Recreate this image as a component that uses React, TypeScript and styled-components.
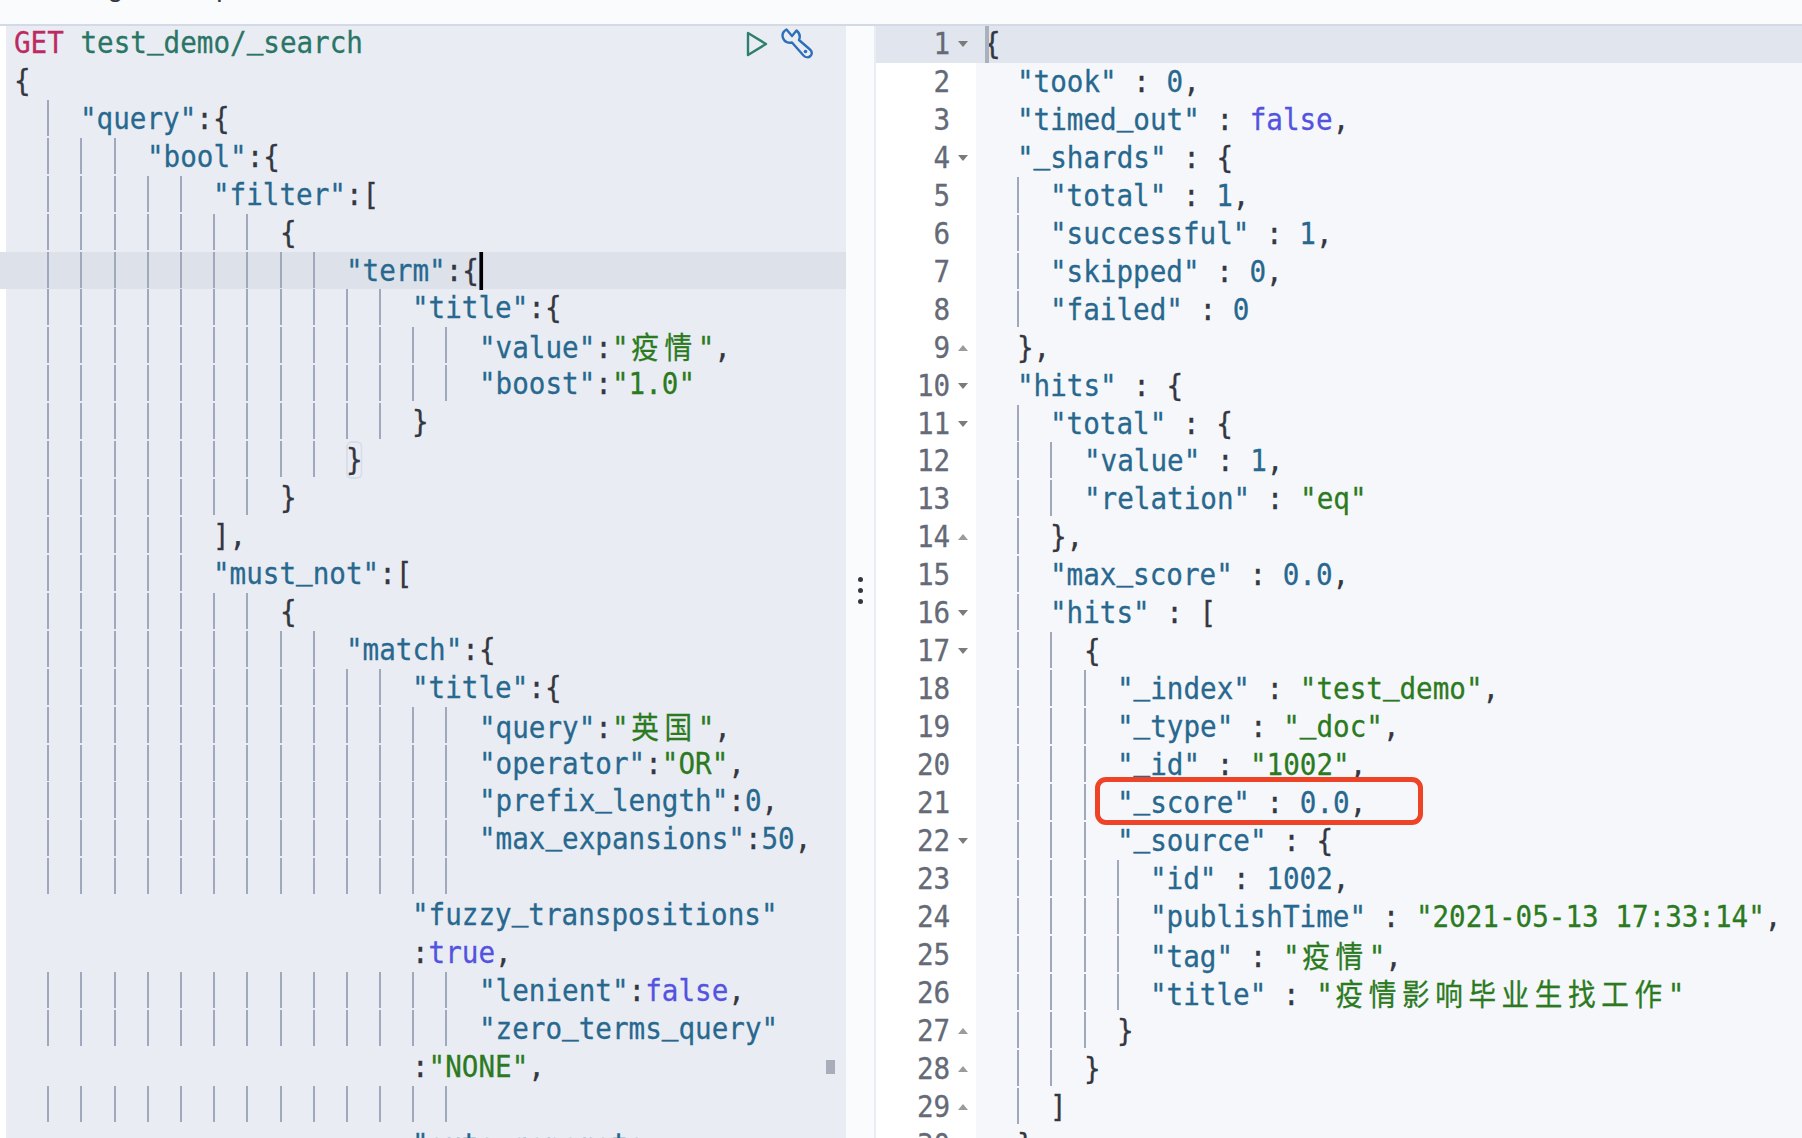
import React from "react";
import styled, { createGlobalStyle } from "styled-components";

type Kind = "key" | "str" | "num" | "bool" | "punct" | "method" | "url";
type Token = [Kind, string];
interface Line {
  guides: number;
  tokens: Token[];
  indent?: number;
  active?: boolean;
  fold?: "up" | "down";
  caret?: boolean;
  matched?: boolean;
  bar?: boolean;
  nudge?: boolean;
}

const ROW = 37.93;
const OUT_ROW = 37.96;
const CELL = 33.2;
const HAN = /[\u4e00-\u9fff]/;

const colors: Record<Kind, string> = {
  key: "#28688f",
  str: "#2c7a1f",
  num: "#28688f",
  bool: "#5353e0",
  punct: "#343741",
  method: "#bc2a63",
  url: "#2a7566",
};

const GlobalStyle = createGlobalStyle`
  html, body {
    margin: 0;
    padding: 0;
    background: #fafbfd;
    overflow: hidden;
  }
`;

const Page = styled.div`
  width: 1802px;
  height: 1138px;
  display: flex;
  flex-direction: column;
  overflow: hidden;
  font-family: "DejaVu Sans Mono", "Noto Sans CJK SC", monospace;
`;

const TopBar = styled.div`
  flex: 0 0 26px;
  box-sizing: border-box;
  position: relative;
  z-index: 2;
  display: flex;
  gap: 37px;
  padding-left: 36px;
  overflow: hidden;
  background: #fafbfd;
  border-bottom: 2px solid #d3dae6;
  font-family: "Liberation Sans", sans-serif;
  font-size: 28px;
  line-height: 32px;
  color: #343741;
`;

const TopLink = styled.span`
  margin-top: -29px;
  white-space: pre;
`;

const Panels = styled.div`
  flex: 1;
  display: flex;
  min-height: 0;
`;

const RequestPane = styled.div`
  flex: 0 0 846px;
  position: relative;
  overflow: hidden;
  background: linear-gradient(to right, #fff 6px, #e9edf3 6px);
`;

const Rows = styled.div<{ $top: number }>`
  display: flex;
  flex-direction: column;
  margin-top: ${(p) => p.$top}px;
`;

const Row = styled.div<{ $active?: boolean }>`
  flex: 0 0 ${ROW}px;
  height: ${ROW}px;
  display: flex;
  padding-left: 14px;
  background: ${(p) => (p.$active ? "#dde1ea" : "transparent")};
`;

const Cell = styled.span<{ $guide?: boolean }>`
  flex: 0 0 ${CELL}px;
  box-sizing: border-box;
  height: 36px;
  border-left: ${(p) => (p.$guide ? "2px solid #a0a8bb" : "none")};
`;

const Code = styled.span<{ $nudge?: boolean }>`
  display: inline-block;
  flex: none;
  font-size: 30px;
  line-height: 38px;
  white-space: pre;
  -webkit-text-stroke: 0.3px currentColor;
  transform: ${(p) => (p.$nudge ? "translateY(2px) " : "")}scaleX(0.92);
  transform-origin: left center;
`;

const Tok = styled.span<{ $kind: Kind }>`
  color: ${(p) => colors[p.$kind]};
`;

const Cjk = styled.span`
  letter-spacing: 6.1px;
  margin-left: 3px;
`;

// the reference's underscore sits right under the baseline and reads heavier
const Under = styled.span`
  display: inline-block;
  -webkit-text-stroke: 0.5px currentColor;
  transform: translateY(-5px);
`;

const Matched = styled.span`
  display: inline-block;
  color: #343741;
  border-radius: 6px;
  box-shadow: inset 0 0 0 2px #d8ddea;
`;

const BlackCaret = styled.span`
  display: inline-block;
  width: 4px;
  height: 38px;
  vertical-align: top;
  background: #000;
`;

const Actions = styled.div`
  position: absolute;
  top: 1px;
  right: 32px;
  display: flex;
  align-items: center;
  gap: 13px;
`;

const ScrollThumb = styled.div`
  position: absolute;
  top: 1034px;
  right: 11px;
  width: 9px;
  height: 14px;
  background: #a8adb9;
`;

const Resizer = styled.div`
  flex: 0 0 30px;
  box-sizing: border-box;
  display: flex;
  flex-direction: column;
  align-items: center;
  justify-content: center;
  gap: 6px;
  padding-top: 16px;
  background: #fafbfd;
  border-right: 2px solid #e9edf3;
`;

const Dot = styled.span`
  width: 5px;
  height: 5px;
  border-radius: 50%;
  background: #343741;
`;

const ResponsePane = styled.div`
  flex: 1;
  position: relative;
  overflow: hidden;
  background: #f5f7fa;
`;

const OutRow = styled.div<{ $active?: boolean }>`
  position: relative;
  flex: 0 0 ${OUT_ROW}px;
  height: ${OUT_ROW}px;
  display: flex;
  background: ${(p) => (p.$active ? "#e0e5ee" : "transparent")};
`;

const Gutter = styled.div<{ $active?: boolean }>`
  flex: 0 0 100px;
  display: flex;
  justify-content: flex-end;
  background: ${(p) => (p.$active ? "#e0e5ee" : "#fff")};
`;

const LineNo = styled.span`
  font-size: 30px;
  line-height: 38px;
  color: #646a77;
  -webkit-text-stroke: 0.3px currentColor;
  transform: scaleX(0.92);
  transform-origin: right center;
`;

const FoldSlot = styled.span`
  flex: 0 0 26px;
  display: flex;
  align-items: center;
  justify-content: center;
  box-sizing: border-box;
`;

const Fold = styled.span<{ $dir: "up" | "down" }>`
  width: 0;
  height: 0;
  border-left: 5px solid transparent;
  border-right: 5px solid transparent;
  ${(p) =>
    p.$dir === "down"
      ? "border-top: 6px solid #7b7b7b;"
      : "border-bottom: 6px solid #9b9b9b;"}
`;

const OutCode = styled.div`
  flex: 1;
  display: flex;
  padding-left: 8px;
`;

const GrayBar = styled.span`
  position: absolute;
  top: 0;
  bottom: 0;
  left: 109px;
  width: 4px;
  background: #aab0bd;
`;

const Callout = styled.div`
  position: absolute;
  left: 219px;
  top: 751px;
  width: 328px;
  height: 48px;
  box-sizing: border-box;
  border: 5px solid #ef4328;
  border-radius: 11px;
`;

const PlayIcon = () => (
  <svg width="22" height="26" viewBox="0 0 22 26" fill="none">
    <path d="M2 2 L20 13 L2 24 Z" stroke="#2f7f70" strokeWidth="2.4" strokeLinejoin="round" />
  </svg>
);

const WrenchIcon = () => (
  <svg width="33" height="33" viewBox="0 0 33 33" fill="none">
    <path
      d="M5.5 2.5 C2 4.5 .8 8 2.2 11.5 C3.6 15 7.5 16.5 11 15.5 L22.5 28.5 C24.5 30.5 27.5 30.8 29.5 29 C31.5 27 31 24 29 22.5 L18 13 C19.5 9.5 18.5 6 15.5 3.5 L11 9 Z"
      stroke="#2d6fb8"
      strokeWidth="2.4"
      strokeLinejoin="round"
    />
    <circle cx="24.5" cy="24.5" r="1.8" fill="#2d6fb8" />
  </svg>
);

const k = (t: string): Token => ["key", t];
const s = (t: string): Token => ["str", t];
const n = (t: string): Token => ["num", t];
const b = (t: string): Token => ["bool", t];
const p = (t: string): Token => ["punct", t];

const request: Line[] = [
  { guides: -1, tokens: [["method", "GET"], ["url", " test_demo/_search"]] },
  { guides: -1, tokens: [p("{")] },
  { guides: 1, tokens: [k('"query"'), p(":{")] },
  { guides: 3, tokens: [k('"bool"'), p(":{")] },
  { guides: 5, tokens: [k('"filter"'), p(":[")] },
  { guides: 7, tokens: [p("{")] },
  { guides: 9, tokens: [k('"term"'), p(":{")], active: true, caret: true },
  { guides: 11, tokens: [k('"title"'), p(":{")] },
  { guides: 13, tokens: [k('"value"'), p(":"), s('"疫情"'), p(",")] },
  { guides: 13, tokens: [k('"boost"'), p(":"), s('"1.0"')] },
  { guides: 11, tokens: [p("}")] },
  { guides: 9, tokens: [p("}")], matched: true },
  { guides: 7, tokens: [p("}")] },
  { guides: 5, tokens: [p("],")] },
  { guides: 5, tokens: [k('"must_not"'), p(":[")] },
  { guides: 7, tokens: [p("{")] },
  { guides: 9, tokens: [k('"match"'), p(":{")] },
  { guides: 11, tokens: [k('"title"'), p(":{")] },
  { guides: 13, tokens: [k('"query"'), p(":"), s('"英国"'), p(",")] },
  { guides: 13, tokens: [k('"operator"'), p(":"), s('"OR"'), p(",")] },
  { guides: 13, tokens: [k('"prefix_length"'), p(":"), n("0"), p(",")] },
  { guides: 13, tokens: [k('"max_expansions"'), p(":"), n("50"), p(",")] },
  { guides: 13, tokens: [] },
  { guides: 0, indent: 12, tokens: [k('"fuzzy_transpositions"')] },
  { guides: 0, indent: 12, tokens: [p(":"), b("true"), p(",")] },
  { guides: 13, tokens: [k('"lenient"'), p(":"), b("false"), p(",")] },
  { guides: 13, tokens: [k('"zero_terms_query"')] },
  { guides: 0, indent: 12, tokens: [p(":"), s('"NONE"'), p(",")] },
  { guides: 13, tokens: [] },
  { guides: 0, indent: 12, nudge: true, tokens: [k('"auto_generate')] },
];

const response: Line[] = [
  { guides: -1, tokens: [p("{")], active: true, fold: "down", bar: true },
  { guides: 0, tokens: [k('"took"'), p(" : "), n("0"), p(",")] },
  { guides: 0, tokens: [k('"timed_out"'), p(" : "), b("false"), p(",")] },
  { guides: 0, tokens: [k('"_shards"'), p(" : {")], fold: "down" },
  { guides: 1, tokens: [k('"total"'), p(" : "), n("1"), p(",")] },
  { guides: 1, tokens: [k('"successful"'), p(" : "), n("1"), p(",")] },
  { guides: 1, tokens: [k('"skipped"'), p(" : "), n("0"), p(",")] },
  { guides: 1, tokens: [k('"failed"'), p(" : "), n("0")] },
  { guides: 0, tokens: [p("},")], fold: "up" },
  { guides: 0, tokens: [k('"hits"'), p(" : {")], fold: "down" },
  { guides: 1, tokens: [k('"total"'), p(" : {")], fold: "down" },
  { guides: 2, tokens: [k('"value"'), p(" : "), n("1"), p(",")] },
  { guides: 2, tokens: [k('"relation"'), p(" : "), s('"eq"')] },
  { guides: 1, tokens: [p("},")], fold: "up" },
  { guides: 1, tokens: [k('"max_score"'), p(" : "), n("0.0"), p(",")] },
  { guides: 1, tokens: [k('"hits"'), p(" : [")], fold: "down" },
  { guides: 2, tokens: [p("{")], fold: "down" },
  { guides: 3, tokens: [k('"_index"'), p(" : "), s('"test_demo"'), p(",")] },
  { guides: 3, tokens: [k('"_type"'), p(" : "), s('"_doc"'), p(",")] },
  { guides: 3, tokens: [k('"_id"'), p(" : "), s('"1002"'), p(",")] },
  { guides: 3, tokens: [k('"_score"'), p(" : "), n("0.0"), p(",")] },
  { guides: 3, tokens: [k('"_source"'), p(" : {")], fold: "down" },
  { guides: 4, tokens: [k('"id"'), p(" : "), n("1002"), p(",")] },
  { guides: 4, tokens: [k('"publishTime"'), p(" : "), s('"2021-05-13 17:33:14"'), p(",")] },
  { guides: 4, tokens: [k('"tag"'), p(" : "), s('"疫情"'), p(",")] },
  { guides: 4, tokens: [k('"title"'), p(" : "), s('"疫情影响毕业生找工作"')] },
  { guides: 3, tokens: [p("}")], fold: "up" },
  { guides: 2, tokens: [p("}")], fold: "up" },
  { guides: 1, tokens: [p("]")], fold: "up" },
  { guides: 0, tokens: [p("},")] },
];

// CJK runs take two monospace cells in the editor, so they are spaced apart
function renderText(text: string) {
  return text.split(/([\u4e00-\u9fff]+|_)/).map((part, i) => {
    if (part === "_") return <Under key={i}>_</Under>;
    return HAN.test(part) ? <Cjk key={i}>{part}</Cjk> : part;
  });
}

function Indent({ line }: { line: Line }) {
  const cells: React.ReactNode[] = [];
  if (line.indent) {
    for (let i = 0; i < line.indent; i++) cells.push(<Cell key={i} />);
    return <>{cells}</>;
  }
  if (line.guides < 0) return null;
  cells.push(<Cell key="lead" />);
  for (let i = 0; i < line.guides; i++) cells.push(<Cell key={i} $guide />);
  return <>{cells}</>;
}

function CodeText({ line }: { line: Line }) {
  // lines holding CJK sit a little lower, the fallback font raises the line box
  const nudge = line.nudge || line.tokens.some(([, text]) => HAN.test(text));
  return (
    <Code $nudge={nudge}>
      {line.matched ? (
        <Matched>{"}"}</Matched>
      ) : (
        line.tokens.map(([kind, text], i) => (
          <Tok key={i} $kind={kind}>
            {renderText(text)}
          </Tok>
        ))
      )}
      {line.caret && <BlackCaret />}
    </Code>
  );
}

export default function App() {
  return (
    <Page>
      <GlobalStyle />
      <TopBar>
        <TopLink>Settings</TopLink>
        <TopLink>Help</TopLink>
      </TopBar>
      <Panels>
        <RequestPane>
          <Rows $top={-2}>
            {request.map((line, i) => (
              <Row key={i} $active={line.active}>
                <Indent line={line} />
                <CodeText line={line} />
              </Row>
            ))}
          </Rows>
          <Actions>
            <PlayIcon />
            <WrenchIcon />
          </Actions>
          <ScrollThumb />
        </RequestPane>
        <Resizer>
          <Dot />
          <Dot />
          <Dot />
        </Resizer>
        <ResponsePane>
          <Rows $top={-1}>
            {response.map((line, i) => (
              <OutRow key={i} $active={line.active}>
                <Gutter $active={line.active}>
                  <LineNo>{i + 1}</LineNo>
                  <FoldSlot>{line.fold && <Fold $dir={line.fold} />}</FoldSlot>
                </Gutter>
                <OutCode>
                  <Indent line={line} />
                  <CodeText line={line} />
                </OutCode>
                {line.bar && <GrayBar />}
              </OutRow>
            ))}
          </Rows>
          <Callout />
        </ResponsePane>
      </Panels>
    </Page>
  );
}
